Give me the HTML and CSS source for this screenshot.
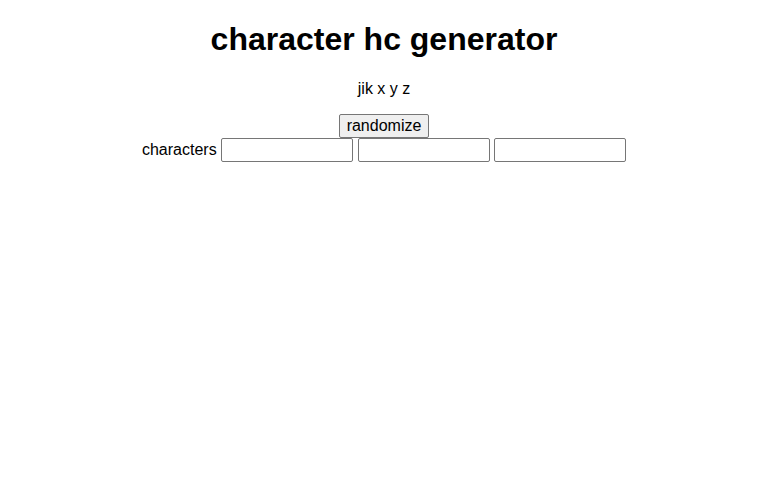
FILE: index.html
```html
<!DOCTYPE html>
<html>
<head>
<meta charset="utf-8">
<title>character hc generator</title>
<link rel="stylesheet" href="styles.css">
</head>
<body>
<h1 class="title">character hc generator</h1>
<p class="letters">jik x y z</p>
<div class="controls">
  <button class="btn" type="button">randomize</button>
</div>
<div class="row">
  <label class="label">characters</label>
  <input class="field" type="text">
  <input class="field" type="text">
  <input class="field" type="text">
</div>
</body>
</html>
```

FILE: styles.css
```css
body {
  margin: 0;
  font-family: "Liberation Sans", Arial, sans-serif;
  font-size: 16px;
  color: #000;
  background: #fff;
  text-align: center;
}

.title {
  font-size: 32px;
  font-weight: bold;
  margin: 21px 0 22px;
}

.letters {
  margin: 16px 0;
}

.controls {
  height: 24px;
}

.btn {
  font-family: inherit;
  font-size: 16px;
  height: 24px;
  padding: 0 7px;
  border: 1px solid #767676;
  border-radius: 2px;
  background: #efefef;
  color: #000;
  vertical-align: top;
}

.row {
  height: 24px;
}

.field {
  box-sizing: border-box;
  width: 132px;
  height: 24px;
  border: 1px solid #767676;
  border-radius: 2px;
  padding: 1px 2px;
  font-family: inherit;
  font-size: 16px;
  vertical-align: middle;
  margin: 0;
}

.label {
  vertical-align: middle;
}
```
